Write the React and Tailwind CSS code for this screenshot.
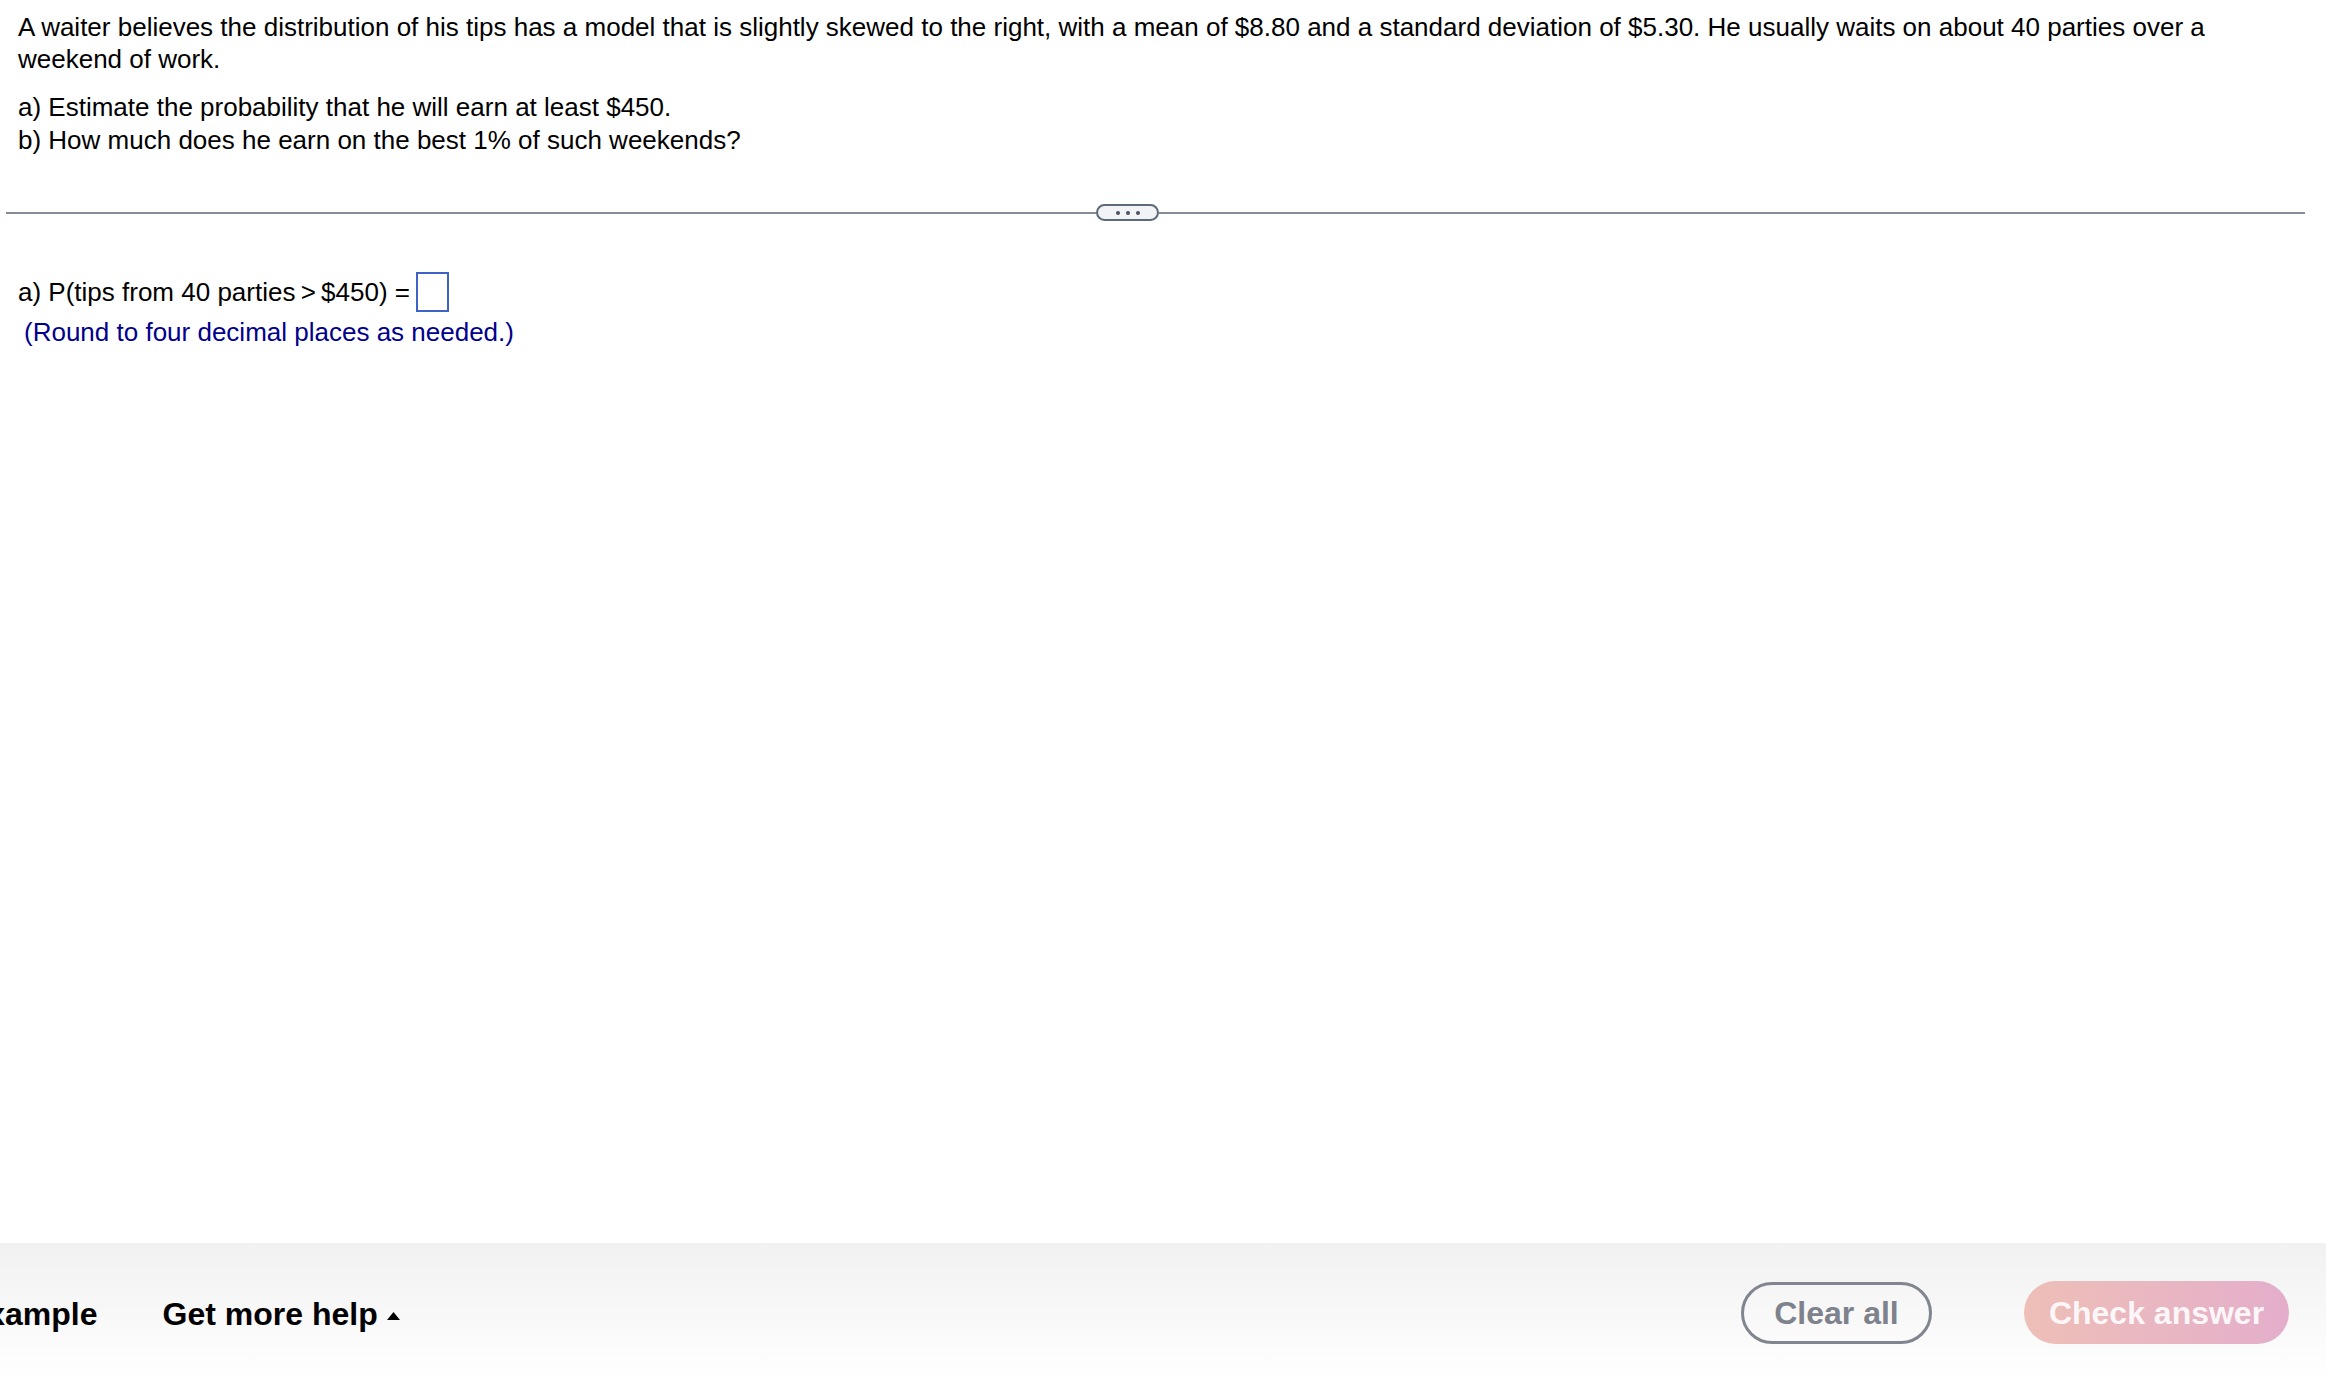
export default function App() {
  return (
    <div className="flex flex-col h-[1382px] w-full overflow-hidden bg-white font-['Liberation_Sans',Arial,sans-serif] text-black">
      <div className="flex-1">
        <div className="pl-[18px] pt-[11px] text-[26px] leading-[32px]">
          <p>
            A waiter believes the distribution of his tips has a model that is slightly skewed to the right, with a mean of $8.80 and a standard deviation of $5.30. He usually waits on about 40 parties over a
            <br />
            weekend of work.
          </p>
          <p className="mt-[16px] leading-[33px]">
            a) Estimate the probability that he will earn at least $450.
            <br />
            b) How much does he earn on the best 1% of such weekends?
          </p>
        </div>

        <div className="mt-[47px] flex h-[17px] items-center pl-[6px] pr-[21px]">
          <div className="h-[2px] w-[1090px] bg-[#868c96]" />
          <div className="flex h-[17px] w-[63px] items-center justify-center gap-[6px] rounded-full border-2 border-[#5e6978] bg-[#f1f3f6]">
            <span className="h-[4px] w-[4px] rounded-full bg-[#4b5361]" />
            <span className="h-[4px] w-[4px] rounded-full bg-[#4b5361]" />
            <span className="h-[4px] w-[4px] rounded-full bg-[#4b5361]" />
          </div>
          <div className="h-[2px] flex-1 bg-[#868c96]" />
        </div>

        <div className="mt-[51px] flex h-[40px] items-center pl-[18px] text-[26px] leading-[32px]">
          <span>a) P(tips from 40 parties{"\u2009"}&gt;{"\u2009"}$450) =</span>
          <span className="ml-[6px] h-[40px] w-[33px] border-2 border-[#3d63c7] bg-white" />
        </div>
        <div className="mt-[4px] pl-[24px] text-[26px] leading-[32px] text-[#00008c]">
          (Round to four decimal places as needed.)
        </div>
      </div>

      <div className="flex h-[139px] items-center bg-gradient-to-b from-[#f1f1f1] to-[#ffffff]">
        <span className="-ml-[158px] mt-[2px] whitespace-nowrap text-[32px] font-bold text-black">View an example</span>
        <span className="ml-[65px] mt-[2px] whitespace-nowrap text-[32px] font-bold text-black">Get more help</span>
        <svg className="ml-[9px] mt-[6px]" width="13" height="8" viewBox="0 0 13 8">
          <polygon points="6.5,0 13,8 0,8" fill="#000" />
        </svg>
        <div className="flex-1" />
        <button className="flex h-[62px] w-[191px] items-center justify-center rounded-full border-[3px] border-[#80858f] bg-transparent text-[32px] font-bold text-[#7d828d]">
          Clear all
        </button>
        <button className="ml-[92px] mr-[37px] flex h-[63px] w-[265px] items-center justify-center rounded-full bg-gradient-to-r from-[#eebfb7] to-[#e4aecb] text-[32px] font-bold text-[#fbf7f9]">
          Check answer
        </button>
      </div>
    </div>
  );
}
